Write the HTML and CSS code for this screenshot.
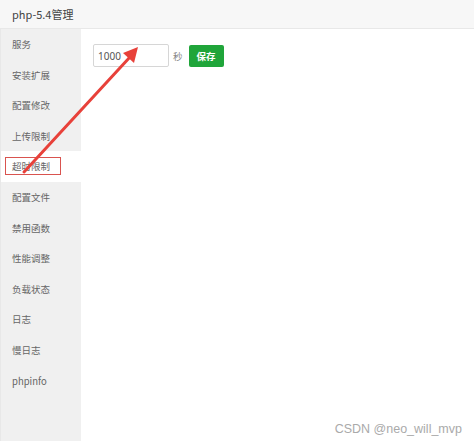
FILE: index.html
```html
<!DOCTYPE html>
<html>
<head>
  <meta charset="UTF-8">
  <title>php-5.4管理</title>
  <link rel="stylesheet" href="styles.css">
</head>
<body>
  <div class="panel">
    <div class="panel-head">php-5.4管理</div>
    <div class="panel-body">
      <ul class="side-nav">
        <li>服务</li>
        <li>安装扩展</li>
        <li>配置修改</li>
        <li>上传限制</li>
        <li class="active">超时限制</li>
        <li>配置文件</li>
        <li>禁用函数</li>
        <li>性能调整</li>
        <li>负载状态</li>
        <li>日志</li>
        <li>慢日志</li>
        <li>phpinfo</li>
      </ul>
      <div class="content">
        <div class="form-row">
          <input type="text" class="num-input" value="1000">
          <span class="unit">秒</span>
          <button class="btn-save">保存</button>
        </div>
      </div>
    </div>

    <!-- annotation drawn over the page -->
    <svg class="mark" width="474" height="443" viewBox="0 0 474 443">
      <rect x="5.5" y="157.5" width="55" height="17" fill="none" stroke="#d9534f" stroke-width="1"/>
      <line x1="24" y1="172" x2="130" y2="57" stroke="#e8413a" stroke-width="3" stroke-linecap="round"/>
      <polygon points="138,47 134,63 123,53" fill="#e8413a"/>
    </svg>

    <div class="watermark">CSDN @neo_will_mvp</div>
  </div>
</body>
</html>
```

FILE: styles.css
```css
body {
  margin: 0;
  font-family: "Noto Sans CJK SC", "Noto Sans", sans-serif;
  color: #555;
  background: #fff;
}
.panel {
  position: relative;
  width: 474px;
  height: 441px;
  display: flex;
  flex-direction: column;
}
.panel-head {
  height: 29px;
  line-height: 29px;
  padding-left: 12px;
  font-size: 11px;
  color: #444;
  background: #f7f7f7;
  border-bottom: 1px solid #e8e8e8;
  box-sizing: border-box;
}
.panel-body {
  flex: 1;
  display: flex;
}
.side-nav {
  width: 81px;
  margin: 0;
  padding: 0;
  list-style: none;
  background: #f0f0f0;
  border-left: 1px solid #e8e8e8;
  box-sizing: border-box;
}
.side-nav li {
  height: 30.6px;
  line-height: 30.6px;
  padding-left: 11px;
  font-size: 9.5px;
  color: #666;
}
.side-nav li.active {
  background: #fff;
}
.content {
  flex: 1;
  padding: 15px 12px;
}
.form-row {
  display: flex;
  align-items: center;
  gap: 4px;
}
.num-input {
  width: 76px;
  height: 23px;
  box-sizing: border-box;
  padding: 0 4px;
  border: 1px solid #d6d6d6;
  border-radius: 2px;
  font-family: "Noto Sans", sans-serif;
  font-size: 10px;
  color: #555;
}
.unit {
  font-size: 9.5px;
  color: #888;
  margin: 0 2px 0 0;
}
.btn-save {
  width: 35px;
  height: 22px;
  padding: 0;
  border: none;
  border-radius: 2px;
  background: #20a53a;
  color: #fff;
  font-family: "Noto Sans CJK SC", sans-serif;
  font-size: 9.5px;
  font-weight: bold;
}
.mark {
  position: absolute;
  left: 0;
  top: 0;
  pointer-events: none;
}
.watermark {
  position: absolute;
  right: 12px;
  top: 422px;
  font-family: "Liberation Sans", Arial, sans-serif;
  font-size: 12.5px;
  color: #aaa;
}
```
